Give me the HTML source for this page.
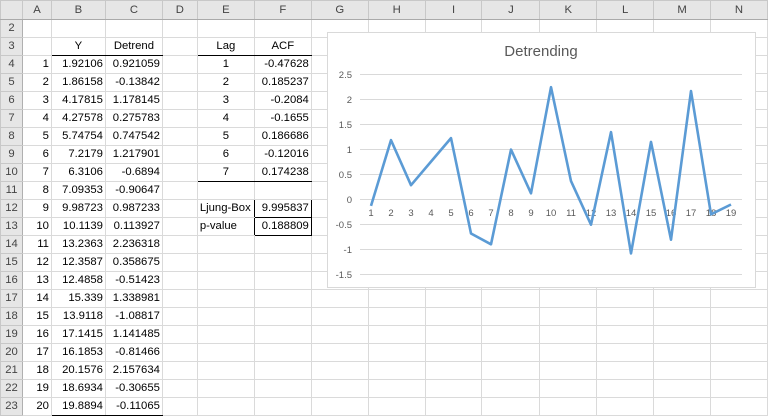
<!DOCTYPE html>
<html><head><meta charset="utf-8"><style>
body{margin:0;width:768px;height:415px;overflow:hidden;background:#fff;font-family:"Liberation Sans",Calibri,sans-serif;font-size:11.3px;color:#000;position:relative}
table{border-collapse:collapse;table-layout:fixed;position:absolute;left:0;top:0}
td{height:17px;border:1px solid #dadada;padding:0 2px;white-space:nowrap;overflow:hidden;text-align:right;line-height:17px}
tr.h td{height:18px;background:#e6e6e6;color:#444;text-align:center;border-color:#c8c8c8;border-bottom:1px solid #aaa}
td.rh{background:#e6e6e6;color:#444;text-align:center;border-color:#c8c8c8;border-right:1px solid #b0b0b0}
.c{text-align:center}.l{text-align:left}
.t{border-top:1px solid #000}.b{border-bottom:1px solid #000}
.box{border:1px solid #000}
.rb{border-right:1px solid #000}
</style></head><body>
<table>
<colgroup><col style="width:22px"><col style="width:29px"><col style="width:54px"><col style="width:57px"><col style="width:35px"><col style="width:57px"><col style="width:57px"><col style="width:57px"><col style="width:57px"><col style="width:57px"><col style="width:58px"><col style="width:57px"><col style="width:57px"><col style="width:57px"><col style="width:57px"></colgroup>
<tr class="h"><td></td><td>A</td><td>B</td><td>C</td><td>D</td><td>E</td><td>F</td><td>G</td><td>H</td><td>I</td><td>J</td><td>K</td><td>L</td><td>M</td><td>N</td></tr>
<tr><td class="rh">2</td><td></td><td></td><td></td><td></td><td></td><td></td><td></td><td></td><td></td><td></td><td></td><td></td><td></td><td></td></tr>
<tr><td class="rh">3</td><td></td><td class="c t b">Y</td><td class="c t b">Detrend</td><td></td><td class="c t b">Lag</td><td class="c t b">ACF</td><td></td><td></td><td></td><td></td><td></td><td></td><td></td><td></td></tr>
<tr><td class="rh">4</td><td>1</td><td>1.92106</td><td>0.921059</td><td></td><td class="c">1</td><td>-0.47628</td><td></td><td></td><td></td><td></td><td></td><td></td><td></td><td></td></tr>
<tr><td class="rh">5</td><td>2</td><td>1.86158</td><td>-0.13842</td><td></td><td class="c">2</td><td>0.185237</td><td></td><td></td><td></td><td></td><td></td><td></td><td></td><td></td></tr>
<tr><td class="rh">6</td><td>3</td><td>4.17815</td><td>1.178145</td><td></td><td class="c">3</td><td>-0.2084</td><td></td><td></td><td></td><td></td><td></td><td></td><td></td><td></td></tr>
<tr><td class="rh">7</td><td>4</td><td>4.27578</td><td>0.275783</td><td></td><td class="c">4</td><td>-0.1655</td><td></td><td></td><td></td><td></td><td></td><td></td><td></td><td></td></tr>
<tr><td class="rh">8</td><td>5</td><td>5.74754</td><td>0.747542</td><td></td><td class="c">5</td><td>0.186686</td><td></td><td></td><td></td><td></td><td></td><td></td><td></td><td></td></tr>
<tr><td class="rh">9</td><td>6</td><td>7.2179</td><td>1.217901</td><td></td><td class="c">6</td><td>-0.12016</td><td></td><td></td><td></td><td></td><td></td><td></td><td></td><td></td></tr>
<tr><td class="rh">10</td><td>7</td><td>6.3106</td><td>-0.6894</td><td></td><td class="c b">7</td><td class="b">0.174238</td><td></td><td></td><td></td><td></td><td></td><td></td><td></td><td></td></tr>
<tr><td class="rh">11</td><td>8</td><td>7.09353</td><td>-0.90647</td><td></td><td></td><td></td><td></td><td></td><td></td><td></td><td></td><td></td><td></td><td></td></tr>
<tr><td class="rh">12</td><td>9</td><td>9.98723</td><td>0.987233</td><td></td><td class="l rb">Ljung-Box</td><td class="box">9.995837</td><td></td><td></td><td></td><td></td><td></td><td></td><td></td><td></td></tr>
<tr><td class="rh">13</td><td>10</td><td>10.1139</td><td>0.113927</td><td></td><td class="l rb">p-value</td><td class="box">0.188809</td><td></td><td></td><td></td><td></td><td></td><td></td><td></td><td></td></tr>
<tr><td class="rh">14</td><td>11</td><td>13.2363</td><td>2.236318</td><td></td><td></td><td></td><td></td><td></td><td></td><td></td><td></td><td></td><td></td><td></td></tr>
<tr><td class="rh">15</td><td>12</td><td>12.3587</td><td>0.358675</td><td></td><td></td><td></td><td></td><td></td><td></td><td></td><td></td><td></td><td></td><td></td></tr>
<tr><td class="rh">16</td><td>13</td><td>12.4858</td><td>-0.51423</td><td></td><td></td><td></td><td></td><td></td><td></td><td></td><td></td><td></td><td></td><td></td></tr>
<tr><td class="rh">17</td><td>14</td><td>15.339</td><td>1.338981</td><td></td><td></td><td></td><td></td><td></td><td></td><td></td><td></td><td></td><td></td><td></td></tr>
<tr><td class="rh">18</td><td>15</td><td>13.9118</td><td>-1.08817</td><td></td><td></td><td></td><td></td><td></td><td></td><td></td><td></td><td></td><td></td><td></td></tr>
<tr><td class="rh">19</td><td>16</td><td>17.1415</td><td>1.141485</td><td></td><td></td><td></td><td></td><td></td><td></td><td></td><td></td><td></td><td></td><td></td></tr>
<tr><td class="rh">20</td><td>17</td><td>16.1853</td><td>-0.81466</td><td></td><td></td><td></td><td></td><td></td><td></td><td></td><td></td><td></td><td></td><td></td></tr>
<tr><td class="rh">21</td><td>18</td><td>20.1576</td><td>2.157634</td><td></td><td></td><td></td><td></td><td></td><td></td><td></td><td></td><td></td><td></td><td></td></tr>
<tr><td class="rh">22</td><td>19</td><td>18.6934</td><td>-0.30655</td><td></td><td></td><td></td><td></td><td></td><td></td><td></td><td></td><td></td><td></td><td></td></tr>
<tr><td class="rh">23</td><td>20</td><td class="b">19.8894</td><td class="b">-0.11065</td><td></td><td></td><td></td><td></td><td></td><td></td><td></td><td></td><td></td><td></td><td></td></tr>
</table>
<svg width="768" height="415" style="position:absolute;left:0;top:0" font-family="Liberation Sans, sans-serif">
<rect x="327.5" y="32.5" width="428" height="255" fill="#fff" stroke="#d9d9d9"/>
<text x="541" y="56" text-anchor="middle" font-size="15" fill="#595959">Detrending</text>
<g stroke="#d9d9d9" stroke-width="1">
<line x1="360" x2="742" y1="74.5" y2="74.5"/><line x1="360" x2="742" y1="99.5" y2="99.5"/><line x1="360" x2="742" y1="124.5" y2="124.5"/><line x1="360" x2="742" y1="149.5" y2="149.5"/><line x1="360" x2="742" y1="174.5" y2="174.5"/><line x1="360" x2="742" y1="199.5" y2="199.5"/><line x1="360" x2="742" y1="224.5" y2="224.5"/><line x1="360" x2="742" y1="249.5" y2="249.5"/><line x1="360" x2="742" y1="274.5" y2="274.5"/>
</g>
<g font-size="9.5" fill="#595959" text-anchor="end">
<text x="352" y="78">2.5</text><text x="352" y="103">2</text><text x="352" y="128">1.5</text><text x="352" y="153">1</text><text x="352" y="178">0.5</text><text x="352" y="203">0</text><text x="352" y="228">-0.5</text><text x="352" y="253">-1</text><text x="352" y="278">-1.5</text>
</g>
<g font-size="9.5" fill="#595959" text-anchor="middle">
<text x="371" y="216">1</text><text x="391" y="216">2</text><text x="411" y="216">3</text><text x="431" y="216">4</text><text x="451" y="216">5</text><text x="471" y="216">6</text><text x="491" y="216">7</text><text x="511" y="216">8</text><text x="531" y="216">9</text><text x="551" y="216">10</text><text x="571" y="216">11</text><text x="591" y="216">12</text><text x="611" y="216">13</text><text x="631" y="216">14</text><text x="651" y="216">15</text><text x="671" y="216">16</text><text x="691" y="216">17</text><text x="711" y="216">18</text><text x="731" y="216">19</text>
</g>
<polyline fill="none" stroke="#5b9bd5" stroke-width="2.6" stroke-linejoin="round" points="371,205.9 391,140.1 411,185.2 431,161.6 451,138.1 471,233.5 491,244.3 511,149.6 531,193.3 551,87.2 571,181.1 591,224.7 611,132.1 631,253.4 651,141.9 671,239.7 691,91.1 711,214.3 731,204.5"/>
</svg>
</body></html>
